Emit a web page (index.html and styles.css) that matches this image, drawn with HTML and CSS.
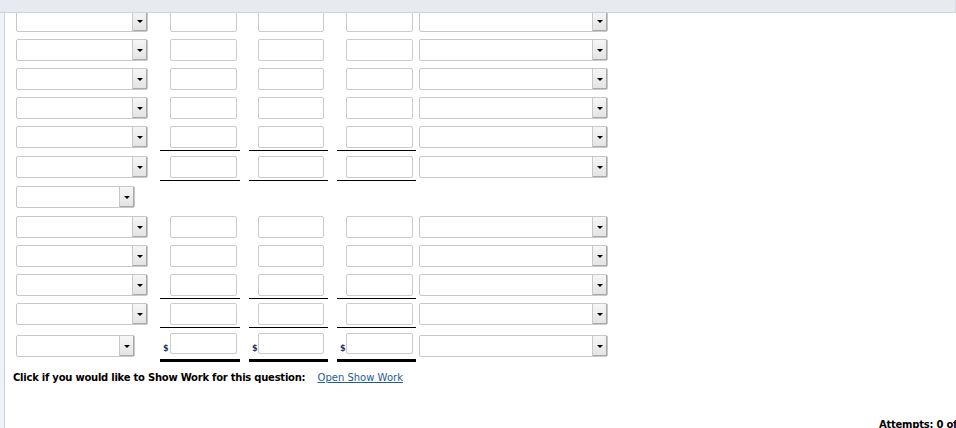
FILE: index.html
```html
<!DOCTYPE html>
<html>
<head>
<meta charset="utf-8">
<link rel="stylesheet" href="styles.css">
</head>
<body>
<div class="topbar"></div>
<div class="page">
  <div class="frame">
    <div class="rows">
      <div class="row">
        <div class="sel"><span class="btn"><i class="arr"></i></span></div>
        <div class="cell c1"><span class="cur"></span><input type="text"></div>
        <div class="cell c2"><span class="cur"></span><input type="text"></div>
        <div class="cell c3"><span class="cur"></span><input type="text"></div>
        <div class="sel right"><span class="btn"><i class="arr"></i></span></div>
      </div>
      <div class="row">
        <div class="sel"><span class="btn"><i class="arr"></i></span></div>
        <div class="cell c1"><span class="cur"></span><input type="text"></div>
        <div class="cell c2"><span class="cur"></span><input type="text"></div>
        <div class="cell c3"><span class="cur"></span><input type="text"></div>
        <div class="sel right"><span class="btn"><i class="arr"></i></span></div>
      </div>
      <div class="row">
        <div class="sel"><span class="btn"><i class="arr"></i></span></div>
        <div class="cell c1"><span class="cur"></span><input type="text"></div>
        <div class="cell c2"><span class="cur"></span><input type="text"></div>
        <div class="cell c3"><span class="cur"></span><input type="text"></div>
        <div class="sel right"><span class="btn"><i class="arr"></i></span></div>
      </div>
      <div class="row">
        <div class="sel"><span class="btn"><i class="arr"></i></span></div>
        <div class="cell c1"><span class="cur"></span><input type="text"></div>
        <div class="cell c2"><span class="cur"></span><input type="text"></div>
        <div class="cell c3"><span class="cur"></span><input type="text"></div>
        <div class="sel right"><span class="btn"><i class="arr"></i></span></div>
      </div>
      <div class="row tall line">
        <div class="sel"><span class="btn"><i class="arr"></i></span></div>
        <div class="cell c1"><span class="cur"></span><input type="text"></div>
        <div class="cell c2"><span class="cur"></span><input type="text"></div>
        <div class="cell c3"><span class="cur"></span><input type="text"></div>
        <div class="sel right"><span class="btn"><i class="arr"></i></span></div>
      </div>
      <div class="row tall line">
        <div class="sel"><span class="btn"><i class="arr"></i></span></div>
        <div class="cell c1"><span class="cur"></span><input type="text"></div>
        <div class="cell c2"><span class="cur"></span><input type="text"></div>
        <div class="cell c3"><span class="cur"></span><input type="text"></div>
        <div class="sel right"><span class="btn"><i class="arr"></i></span></div>
      </div>
      <div class="row tall">
        <div class="sel short"><span class="btn"><i class="arr"></i></span></div>
      </div>
      <div class="row">
        <div class="sel"><span class="btn"><i class="arr"></i></span></div>
        <div class="cell c1"><span class="cur"></span><input type="text"></div>
        <div class="cell c2"><span class="cur"></span><input type="text"></div>
        <div class="cell c3"><span class="cur"></span><input type="text"></div>
        <div class="sel right"><span class="btn"><i class="arr"></i></span></div>
      </div>
      <div class="row">
        <div class="sel"><span class="btn"><i class="arr"></i></span></div>
        <div class="cell c1"><span class="cur"></span><input type="text"></div>
        <div class="cell c2"><span class="cur"></span><input type="text"></div>
        <div class="cell c3"><span class="cur"></span><input type="text"></div>
        <div class="sel right"><span class="btn"><i class="arr"></i></span></div>
      </div>
      <div class="row line">
        <div class="sel"><span class="btn"><i class="arr"></i></span></div>
        <div class="cell c1"><span class="cur"></span><input type="text"></div>
        <div class="cell c2"><span class="cur"></span><input type="text"></div>
        <div class="cell c3"><span class="cur"></span><input type="text"></div>
        <div class="sel right"><span class="btn"><i class="arr"></i></span></div>
      </div>
      <div class="row tall line">
        <div class="sel"><span class="btn"><i class="arr"></i></span></div>
        <div class="cell c1"><span class="cur"></span><input type="text"></div>
        <div class="cell c2"><span class="cur"></span><input type="text"></div>
        <div class="cell c3"><span class="cur"></span><input type="text"></div>
        <div class="sel right"><span class="btn"><i class="arr"></i></span></div>
      </div>
      <div class="row total">
        <div class="sel short"><span class="btn"><i class="arr"></i></span></div>
        <div class="cell c1"><span class="cur">$</span><input type="text"></div>
        <div class="cell c2"><span class="cur">$</span><input type="text"></div>
        <div class="cell c3"><span class="cur">$</span><input type="text"></div>
        <div class="sel right"><span class="btn"><i class="arr"></i></span></div>
      </div>
    </div>
    <p class="showwork"><b class="prompt">Click if you would like to Show Work for this question:</b> <a href="#" class="link">Open Show Work</a></p>
    <div class="attempts">Attempts: 0 of</div>
  </div>
</div>
</body>
</html>
```
FILE: styles.css
```css
* { box-sizing: border-box; }
html, body {
  margin: 0;
  height: 428px;
  overflow: hidden;
}
body {
  font-family: "DejaVu Sans", Verdana, sans-serif;
  font-size: 11px;
  color: #000;
  background: #fff;
}
.topbar {
  position: fixed;
  top: 0;
  left: 0;
  right: 0;
  height: 13px;
  background: #e7ebf0;
  border-bottom: 1px solid #c8d2e2;
  border-right: 1px solid #d6dce6;
  z-index: 2;
}
.page {
  padding-left: 4px;
  background: #eef2f9;
  height: 428px;
}
.frame {
  border-left: 1px solid #c9d3e4;
  background: #fff;
  height: 100%;
  padding-top: 10px;
}
.rows {
  padding-left: 11px;
  display: flex;
  flex-direction: column;
}
.row {
  display: flex;
  align-items: flex-start;
  height: 29px;
}
.row.tall { height: 30px; }
.sel {
  flex: none;
  width: 132px;
  height: 22px;
  border: 1px solid #c8c8c8;
  border-radius: 2px;
  background: #fff;
  display: flex;
  justify-content: flex-end;
  margin-right: 12px;
}
.sel.short { width: 119px; margin-right: 25px; }
.sel.right { width: 189px; margin-right: 0; }
.btn {
  width: 15px;
  height: 100%;
  border-left: 1px solid #c8c8c8;
  background: linear-gradient(#f6f6f6, #e3e3e3);
  box-shadow: inset -1px -1px 0 #a9a9a9;
  display: flex;
  align-items: center;
  justify-content: center;
}
.arr {
  display: block;
  width: 0;
  height: 0;
  border-left: 3px solid transparent;
  border-right: 3px solid transparent;
  border-top: 3px solid #000;
  margin-left: -1px;
}
.cell {
  flex: none;
  width: 79px;
  padding-left: 3px;
  display: flex;
  align-items: flex-end;
  margin-right: 9px;
}
.cell.c1 { width: 80px; }
.cell.c3 { margin-right: 3px; }
.cur {
  flex: none;
  width: 6px;
  font-size: 8px;
  font-weight: bold;
  line-height: 9px;
  color: #1d3766;
  margin-bottom: 1px;
}
.c1 .cur { width: 7px; }
.cell input {
  display: block;
  width: 67px;
  height: 22px;
  margin: 0;
  padding: 0;
  border: 1px solid #cbcbcb;
  border-radius: 2px;
  background: #fff;
  font: inherit;
}
.c2 input { width: 66px; }
.line .cell {
  border-bottom: 1px solid #000;
  padding-bottom: 2px;
}
.total .cell {
  border-bottom: 3px solid #000;
  padding-bottom: 5px;
}
.total .cell input { height: 21px; }
.total .sel { margin-top: 2px; }
.showwork {
  margin: 9px 0 0;
  padding-left: 8px;
  font-size: 10px;
  line-height: 13px;
  white-space: nowrap;
}
.prompt {
  letter-spacing: -0.24px;
}
.link {
  margin-left: 9px;
  color: #1f5c99;
  text-decoration: underline;
}
.attempts {
  margin-top: 34px;
  margin-left: 874px;
  white-space: nowrap;
  font-weight: bold;
  font-size: 10px;
  letter-spacing: -0.24px;
  line-height: 13px;
}
```
